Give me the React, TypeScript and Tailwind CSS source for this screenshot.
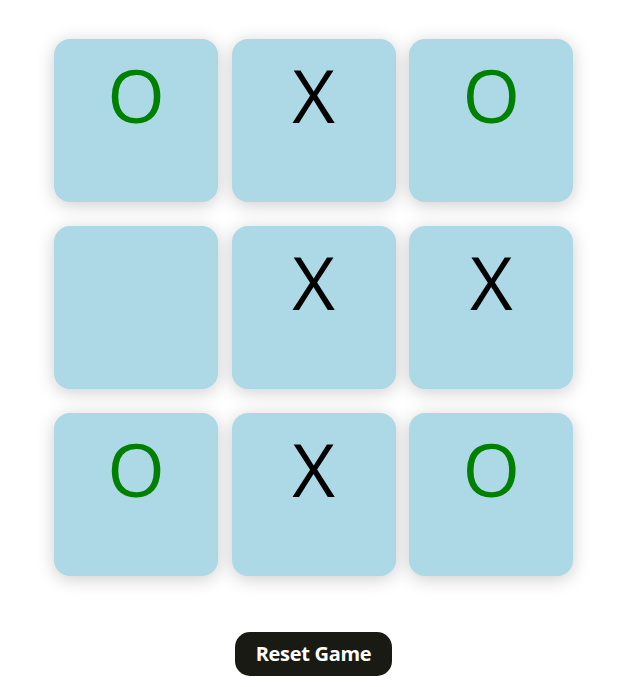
const board = ["O", "X", "O", "", "X", "X", "O", "X", "O"];

function Cell({ value }: { value: string }) {
  return (
    <button
      className={`h-[163px] w-[164px] rounded-[16px] bg-[#add8e6] shadow-[0_3px_18px_rgba(0,0,0,0.2)] flex justify-center items-start pt-[12px] text-[74px] leading-[1.2] ${
        value === "O" ? "text-[#008000]" : "text-black"
      }`}
    >
      {value}
    </button>
  );
}

export default function App() {
  return (
    <div
      className="min-h-[687px] bg-white pt-[39px]"
      style={{ fontFamily: '"Open Sans", "Noto Sans", sans-serif' }}
    >
      <div className="ml-[54px] w-[519px] flex flex-col items-center">
        <div className="grid grid-cols-3 gap-x-[14px] gap-y-[24px]">
          {board.map((v, i) => (
            <Cell key={i} value={v} />
          ))}
        </div>
        <button className="mt-[56px] h-[44px] w-[157px] rounded-[15px] bg-[#1a1a14] text-white text-[20px] font-bold tracking-[-0.3px]">
          Reset Game
        </button>
      </div>
    </div>
  );
}
